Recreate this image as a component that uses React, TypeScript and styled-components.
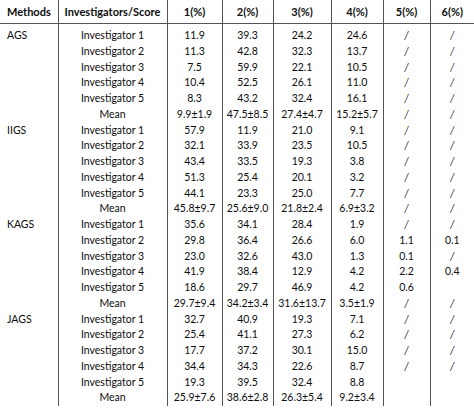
import React from 'react';
import styled, { createGlobalStyle } from 'styled-components';

const GlobalStyle = createGlobalStyle`
  html, body {
    margin: 0;
    padding: 0;
    background: #ffffff;
  }
  body {
    font-family: Lato, "Open Sans", "DejaVu Sans", sans-serif;
    color: #0d0d0d;
  }
`;

type Row = [string, string, string, string, string, string, string];

interface IGroup {
  method: string;
  rows: Row[];
}

const inv = (n: number) => `Investigator ${n}`;

const groups: IGroup[] = [
  {
    method: 'AGS',
    rows: [
      [inv(1), '11.9', '39.3', '24.2', '24.6', '/', '/'],
      [inv(2), '11.3', '42.8', '32.3', '13.7', '/', '/'],
      [inv(3), '7.5', '59.9', '22.1', '10.5', '/', '/'],
      [inv(4), '10.4', '52.5', '26.1', '11.0', '/', '/'],
      [inv(5), '8.3', '43.2', '32.4', '16.1', '/', '/'],
      ['Mean', '9.9±1.9', '47.5±8.5', '27.4±4.7', '15.2±5.7', '/', '/'],
    ],
  },
  {
    method: 'IIGS',
    rows: [
      [inv(1), '57.9', '11.9', '21.0', '9.1', '/', '/'],
      [inv(2), '32.1', '33.9', '23.5', '10.5', '/', '/'],
      [inv(3), '43.4', '33.5', '19.3', '3.8', '/', '/'],
      [inv(4), '51.3', '25.4', '20.1', '3.2', '/', '/'],
      [inv(5), '44.1', '23.3', '25.0', '7.7', '/', '/'],
      ['Mean', '45.8±9.7', '25.6±9.0', '21.8±2.4', '6.9±3.2', '/', '/'],
    ],
  },
  {
    method: 'KAGS',
    rows: [
      [inv(1), '35.6', '34.1', '28.4', '1.9', '/', '/'],
      [inv(2), '29.8', '36.4', '26.6', '6.0', '1.1', '0.1'],
      [inv(3), '23.0', '32.6', '43.0', '1.3', '0.1', '/'],
      [inv(4), '41.9', '38.4', '12.9', '4.2', '2.2', '0.4'],
      [inv(5), '18.6', '29.7', '46.9', '4.2', '0.6', ''],
      ['Mean', '29.7±9.4', '34.2±3.4', '31.6±13.7', '3.5±1.9', '/', '/'],
    ],
  },
  {
    method: 'JAGS',
    rows: [
      [inv(1), '32.7', '40.9', '19.3', '7.1', '/', '/'],
      [inv(2), '25.4', '41.1', '27.3', '6.2', '/', '/'],
      [inv(3), '17.7', '37.2', '30.1', '15.0', '/', '/'],
      [inv(4), '34.4', '34.3', '22.6', '8.7', '/', '/'],
      [inv(5), '19.3', '39.5', '32.4', '8.8', '', ''],
      ['Mean', '25.9±7.6', '38.6±2.8', '26.3±5.4', '9.2±3.4', '', ''],
    ],
  },
];

const headers = ['Methods', 'Investigators/Score', '1(%)', '2(%)', '3(%)', '4(%)', '5(%)', '6(%)'];
const widths = [58, 109, 55, 51, 58, 52, 47, 44];

const Table = styled.table`
  width: 474px;
  table-layout: fixed;
  border-collapse: collapse;
  border-spacing: 0;

  tbody tr:first-child td {
    padding-top: 4px;
  }
`;

const HeadCell = styled.th<{ $left?: boolean }>`
  height: 23px;
  padding: 0 0 0 ${(p) => (p.$left ? '7px' : '0')};
  font-size: 11px;
  font-weight: 700;
  text-align: ${(p) => (p.$left ? 'left' : 'center')};
  border-bottom: 1px solid #555555;
  border-left: ${(p) => (p.$left ? 'none' : '1px solid #555555')};
  white-space: nowrap;
`;

const Cell = styled.td<{ $left?: boolean; $slash?: boolean }>`
  height: 15.75px;
  padding: 0 0 0 ${(p) => (p.$left ? '7px' : '0')};
  font-size: 10.5px;
  line-height: 15.75px;
  text-align: ${(p) => (p.$left ? 'left' : 'center')};
  font-style: ${(p) => (p.$slash ? 'italic' : 'normal')};
  border-left: ${(p) => (p.$left ? 'none' : '1px solid #555555')};
  white-space: nowrap;
  vertical-align: middle;
`;

export default function App() {
  return (
    <>
      <GlobalStyle />
      <Table>
        <colgroup>
          {widths.map((w, i) => (
            <col key={i} style={{ width: w }} />
          ))}
        </colgroup>
        <thead>
          <tr>
            {headers.map((h, i) => (
              <HeadCell key={h} $left={i === 0}>
                {h}
              </HeadCell>
            ))}
          </tr>
        </thead>
        <tbody>
          {groups.map((g) =>
            g.rows.map((r, ri) => (
              <tr key={g.method + ri}>
                <Cell $left>{ri === 0 ? g.method : ''}</Cell>
                {r.map((v, ci) => (
                  <Cell key={ci} $slash={v === '/'}>
                    {v}
                  </Cell>
                ))}
              </tr>
            )),
          )}
        </tbody>
      </Table>
    </>
  );
}
